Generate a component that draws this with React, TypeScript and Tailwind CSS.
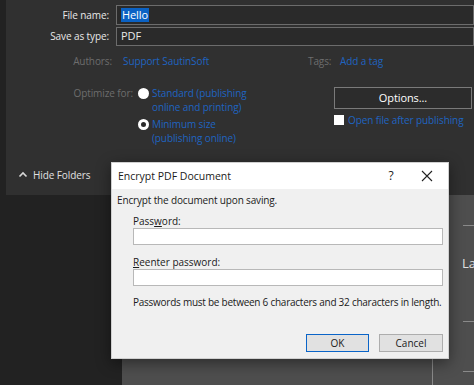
import React from "react";

const font = { fontFamily: '"Open Sans", "Noto Sans", sans-serif' };

function Radio({ checked }: { checked: boolean }) {
  return checked ? (
    <span className="mt-[2px] block h-[11px] w-[11px] shrink-0 rounded-full bg-white" />
  ) : (
    <span className="mt-[2px] block h-[11px] w-[11px] shrink-0 rounded-full border-[3px] border-white bg-[#2a2a2a]" />
  );
}

function SaveForm() {
  return (
    <div className="ml-[6px] h-[195px] bg-[#303030] pt-[5px] text-[10px] tracking-[-0.1px] text-[#e8e8e8]">
      <div className="flex items-center">
        <div className="w-[104px] pr-[1px] text-right">File name:</div>
        <div className="ml-[6px] flex h-[20px] flex-1 items-center border border-[#6c6c6c] bg-[#2a2a2a] pl-[4px]">
          <span className="bg-[#0b62c4] px-[1px] text-[11px] leading-[14px] text-white">Hello</span>
        </div>
      </div>
      <div className="mt-[2px] flex items-center">
        <div className="w-[104px] pr-[1px] text-right">Save as type:</div>
        <div className="ml-[6px] flex h-[19px] flex-1 items-center border border-[#6c6c6c] bg-[#2a2a2a] pl-[4px] text-[11px]">PDF</div>
      </div>
      <div className="mt-[7px] flex items-center leading-[16px]">
        <div className="w-[106px] text-right text-[#6d6d6d]">Authors:</div>
        <div className="ml-[11px] w-[185px] text-[#1f64c0]">Support SautinSoft</div>
        <div className="w-[32px] text-[#6d6d6d]">Tags:</div>
        <div className="text-[#1f64c0]">Add a tag</div>
      </div>
      <div className="mt-[17px] flex leading-[14px]">
        <div className="w-[127px] text-right text-[#6d6d6d]">Optimize for:</div>
        <div className="ml-[5px] w-[196px] text-[#1f64c0]">
          <div className="flex gap-[3px]">
            <Radio checked />
            <div>Standard (publishing<br />online and printing)</div>
          </div>
          <div className="mt-[3px] flex gap-[3px]">
            <Radio checked={false} />
            <div>Minimum size<br />(publishing online)</div>
          </div>
        </div>
        <div className="flex flex-col">
          <div className="mt-[1px] flex h-[22px] w-[138px] items-center justify-center border border-[#7a7a7a] bg-[#2c2c2c] text-[11px] text-white">Options...</div>
          <div className="mt-[4px] flex items-center gap-[4px] text-[#1f64c0]">
            <span className="block h-[10px] w-[10px] bg-white" />
            Open file after publishing
          </div>
        </div>
      </div>
      <div className="mt-[23px] flex items-center pl-[12px] text-[10px] leading-[14px] text-[#e0e0e0]">
        <svg width="10" height="8" viewBox="0 0 10 8" className="mr-[5px]">
          <path d="M1.5 5.5 L5 2 L8.5 5.5" fill="none" stroke="#d8d8d8" strokeWidth="1.6" />
        </svg>
        Hide Folders
      </div>
    </div>
  );
}

function Backdrop() {
  return (
    <div className="flex h-[190px]">
      <div className="w-[122px] bg-[#222222]" />
      <div className="flex flex-1 bg-[#4e4e4e]">
        <div className="flex-1" />
        <div className="mt-[130px] w-[1px] bg-[#8a8a8a]" />
        <div className="w-[41px] pt-[30px] text-[#e0e0e0]">
          <div className="ml-[30px] h-[1px] bg-[#8a8a8a]" />
          <div className="mt-[29px] pl-[29px] text-[13px] leading-[16px]">La</div>
          <div className="ml-[30px] mt-[50px] h-[1px] bg-[#8a8a8a]" />
          <div className="ml-[30px] mt-[49px] h-[1px] bg-[#8a8a8a]" />
        </div>
      </div>
    </div>
  );
}

function EncryptDialog() {
  return (
    <div className="absolute left-[111px] top-[162px] w-[338px] border border-[#d0d0d0] bg-[#f0f0f0] text-[10px] leading-[14px] text-[#1a1a1a] shadow-[0_4px_14px_rgba(0,0,0,0.45)]">
      <div className="flex h-[26px] items-center bg-white pl-[6px] text-[10.5px]">
        <span className="flex-1">Encrypt PDF Document</span>
        <span className="w-[20px] text-center text-[12px]">?</span>
        <svg width="12" height="12" viewBox="0 0 12 12" className="ml-[20px] mr-[15px]">
          <path d="M1 1 L11 11 M11 1 L1 11" stroke="#222" strokeWidth="1.1" />
        </svg>
      </div>
      <div className="pl-[5px] pr-[5px] pt-[4px]">
        <div className="tracking-[-0.15px]">Encrypt the document upon saving.</div>
        <div className="pl-[16px]">
          <div className="mt-[7px]">Pass<span className="underline">w</span>ord:</div>
          <div className="h-[17px] border border-[#b8b8b8] bg-white" />
          <div className="mt-[10px]"><span className="underline">R</span>eenter password:</div>
          <div className="h-[17px] border border-[#b8b8b8] bg-white" />
          <div className="mt-[9px] whitespace-nowrap tracking-[-0.25px]">Passwords must be between 6 characters and 32 characters in length.</div>
          <div className="mt-[25px] flex justify-end gap-[10px] pb-[6px]">
            <div className="flex h-[18px] w-[63px] items-center justify-center border border-[#0a64c8] bg-[#e1e1e1]">OK</div>
            <div className="flex h-[18px] w-[64px] items-center justify-center border border-[#adadad] bg-[#e1e1e1]">Cancel</div>
          </div>
        </div>
      </div>
    </div>
  );
}

export default function App() {
  return (
    <div className="relative h-[385px] w-[474px] overflow-hidden bg-[#222222]" style={font}>
      <SaveForm />
      <Backdrop />
      <EncryptDialog />
    </div>
  );
}
